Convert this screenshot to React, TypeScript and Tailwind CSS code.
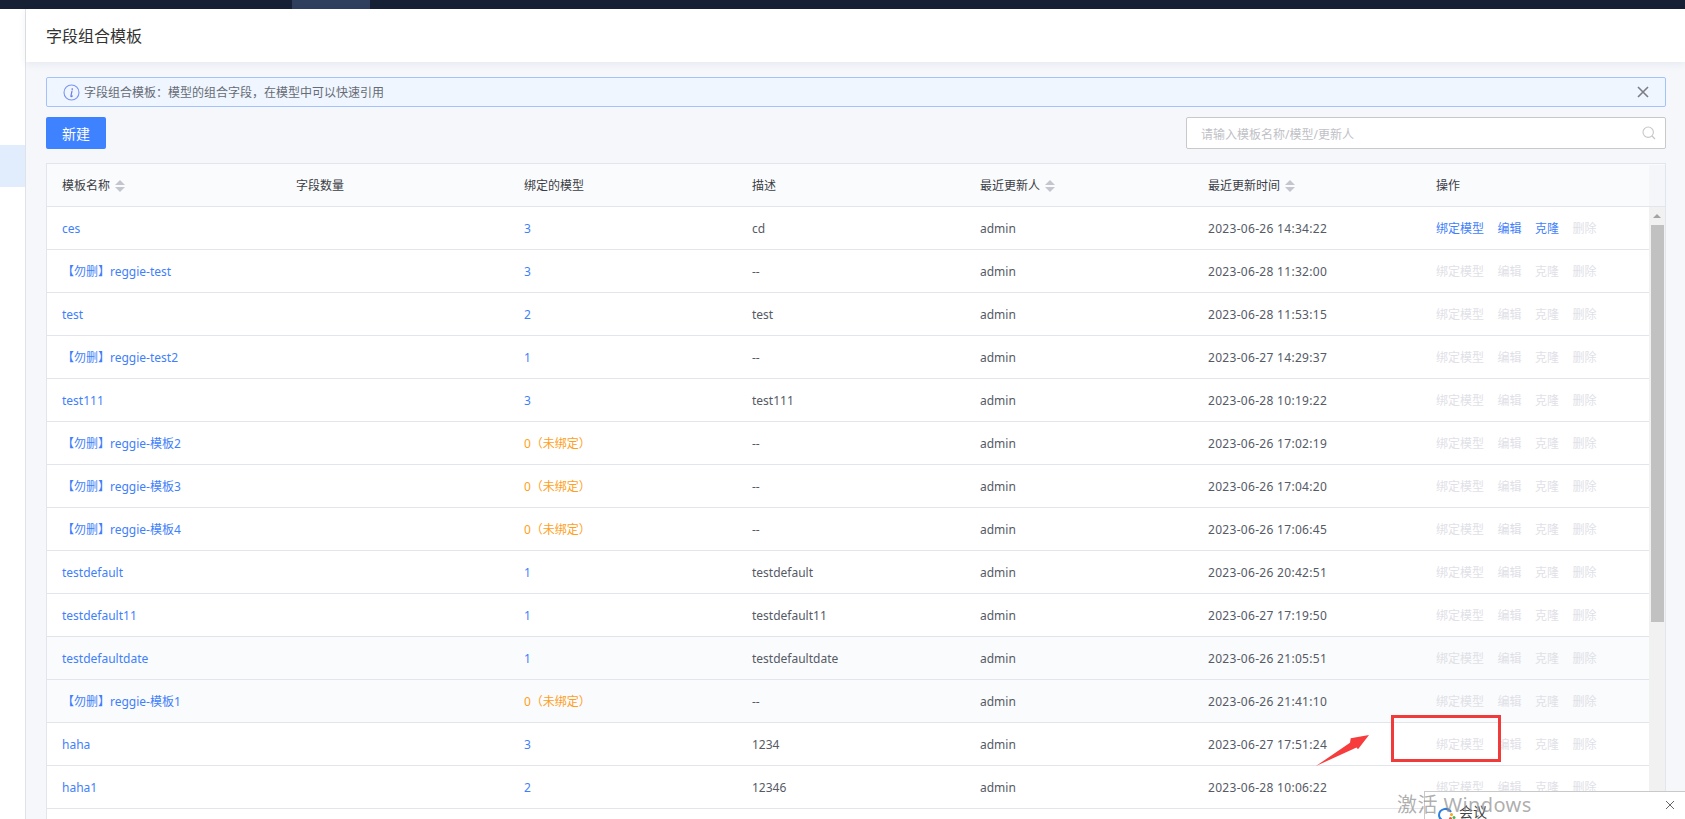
const rows = [
  { name: "ces", count: "3", desc: "cd", time: "2023-06-26 14:34:22" },
  { name: "【勿删】reggie-test", count: "3", desc: "--", time: "2023-06-28 11:32:00" },
  { name: "test", count: "2", desc: "test", time: "2023-06-28 11:53:15" },
  { name: "【勿删】reggie-test2", count: "1", desc: "--", time: "2023-06-27 14:29:37" },
  { name: "test111", count: "3", desc: "test111", time: "2023-06-28 10:19:22" },
  { name: "【勿删】reggie-模板2", count: "0", desc: "--", time: "2023-06-26 17:02:19" },
  { name: "【勿删】reggie-模板3", count: "0", desc: "--", time: "2023-06-26 17:04:20" },
  { name: "【勿删】reggie-模板4", count: "0", desc: "--", time: "2023-06-26 17:06:45" },
  { name: "testdefault", count: "1", desc: "testdefault", time: "2023-06-26 20:42:51" },
  { name: "testdefault11", count: "1", desc: "testdefault11", time: "2023-06-27 17:19:50" },
  { name: "testdefaultdate", count: "1", desc: "testdefaultdate", time: "2023-06-26 21:05:51", tint: true },
  { name: "【勿删】reggie-模板1", count: "0", desc: "--", time: "2023-06-26 21:41:10", tint: true },
  { name: "haha", count: "3", desc: "1234", time: "2023-06-27 17:51:24" },
  { name: "haha1", count: "2", desc: "12346", time: "2023-06-28 10:06:22" },
  { name: "", count: "", desc: "", time: "" },
];

function SortIcon() {
  return (
    <svg width="10" height="12" viewBox="0 0 10 12" className="ml-[5px] shrink-0">
      <path d="M5 0 10 5H0Z" fill="#c3c6ce" />
      <path d="M5 12 0 7H10Z" fill="#c3c6ce" />
    </svg>
  );
}

function HeadCell({ label, sort, className }: { label: string; sort?: boolean; className: string }) {
  return (
    <div className={`flex items-center ${className}`}>
      <span>{label}</span>
      {sort && <SortIcon />}
    </div>
  );
}

function Row({ row, index }: { row: (typeof rows)[number]; index: number }) {
  const active = index === 0;
  const actionColor = active ? "text-[#3f7ffb]" : "text-[#dfe1e7]";
  return (
    <div className={`flex h-[43px] shrink-0 items-center border-b border-[#e3e5ec] pt-[1px] text-[#555a66] ${row.tint ? "bg-[#fafbfc]" : "bg-white"}`}>
      <div className="w-[233px] pl-[15px] text-[#3f7ffb]">{row.name}</div>
      <div className="w-[228px]" />
      <div className="w-[228px] pl-4">
        {row.count === "0" ? (
          <span className="text-[#ff9f1c]">0（未绑定）</span>
        ) : (
          <span className="text-[#3f7ffb]">{row.count}</span>
        )}
      </div>
      <div className="w-[228px] pl-4">{row.desc}</div>
      <div className="w-[228px] pl-4">{row.name && "admin"}</div>
      <div className="w-[228px] pl-4 tracking-[0.3px]">{row.time}</div>
      {row.name && (
        <div className={`flex gap-[13.5px] pl-4 ${actionColor}`}>
          <span>绑定模型</span>
          <span>编辑</span>
          <span>克隆</span>
          <span className="text-[#dfe1e7]">删除</span>
        </div>
      )}
    </div>
  );
}

export default function App() {
  return (
    <div className="relative flex h-[819px] w-full flex-col overflow-hidden bg-white text-[12px] font-['Noto_Sans','Noto_Sans_CJK_SC',sans-serif]">
      <div className="h-[9px] shrink-0 bg-[#172136]">
        <div className="ml-[292px] h-full w-[78px] bg-[#2f3f5e]" />
      </div>

      <div className="flex min-h-0 flex-1">
        <aside className="w-[26px] shrink-0 border-r border-[#dfe2ea] bg-white pt-[136px]">
          <div className="h-[42px] bg-[#e1ecfd]" />
        </aside>

        <main className="flex min-w-0 flex-1 flex-col bg-[#f5f7fb]">
          <header className="flex h-[53px] shrink-0 items-center bg-white pl-5 pt-[1px] text-[16px] text-[#333] shadow-[0_2px_8px_rgba(30,40,70,0.07)]">
            字段组合模板
          </header>

          <div className="flex min-h-0 flex-1 flex-col pl-5 pr-[19px] pt-[15px]">
            <div className="flex h-[30px] shrink-0 items-center rounded-[2px] border border-[#a3c4fb] bg-[#eff6ff] pl-4 pr-4 text-[#666b75]">
              <svg width="17" height="17" viewBox="0 0 17 17" fill="none" className="mr-[4px] shrink-0">
                <circle cx="8.5" cy="8.5" r="7.5" stroke="#7a94f2" strokeWidth="1.1" />
                <path d="M9.2 4.6v1.2M8.9 7.4 7.9 12.2c-.1.5.4.6 1.4-.2" stroke="#6a7ce8" strokeWidth="1.2" strokeLinecap="round" />
              </svg>
              <span className="pt-[1px]">字段组合模板：模型的组合字段，在模型中可以快速引用</span>
              <svg width="12" height="12" viewBox="0 0 12 12" className="ml-auto" fill="none">
                <path d="M1 1 11 11M11 1 1 11" stroke="#7b7e85" strokeWidth="1.6" />
              </svg>
            </div>

            <div className="mt-[10px] flex h-[32px] shrink-0 items-stretch justify-between">
              <button className="w-[60px] rounded-[2px] bg-[#3f82ff] pt-[1px] text-[14px] text-white">新建</button>
              <div className="flex w-[480px] items-center justify-between rounded-[2px] border border-[#c9c9cc] bg-white pl-[14px] pr-[9px] text-[#bfc1c6]">
                <span className="pt-[3px]">请输入模板名称/模型/更新人</span>
                <svg width="14" height="14" viewBox="0 0 14 14" fill="none">
                  <circle cx="6.2" cy="6.2" r="5.2" stroke="#c5c7cc" strokeWidth="1.1" />
                  <path d="M10 10 13 13" stroke="#c5c7cc" strokeWidth="1.2" />
                </svg>
              </div>
            </div>

            <div className="mt-[14px] flex min-h-0 flex-1 flex-col border border-[#e3e5ec] border-b-0">
              <div className="flex h-[43px] shrink-0 border-b border-[#e3e5ec] bg-[#fafbfd] pt-[1px] text-[#3a3d45]">
                <div className="flex flex-1">
                  <HeadCell label="模板名称" sort className="w-[233px] pl-[15px]" />
                  <HeadCell label="字段数量" className="w-[228px] pl-4" />
                  <HeadCell label="绑定的模型" className="w-[228px] pl-4" />
                  <HeadCell label="描述" className="w-[228px] pl-4" />
                  <HeadCell label="最近更新人" sort className="w-[228px] pl-4" />
                  <HeadCell label="最近更新时间" sort className="w-[228px] pl-4" />
                  <HeadCell label="操作" className="w-[200px] pl-4" />
                </div>
                <div className="w-[16px] shrink-0 bg-[#f5f6fa]" />
              </div>

              <div className="flex min-h-0 flex-1 overflow-hidden">
                <div className="flex min-w-0 flex-1 flex-col">
                  {rows.map((row, i) => (
                    <Row key={i} row={row} index={i} />
                  ))}
                </div>
                <div className="flex w-[16px] shrink-0 flex-col items-center bg-[#f1f1f1] pt-[7px]">
                  <svg width="8" height="4" viewBox="0 0 8 4">
                    <path d="M4 0 8 4H0Z" fill="#a3a3a3" />
                  </svg>
                  <div className="ml-[1px] mt-[7px] h-[397px] w-[13px] bg-[#c1c1c1]" />
                </div>
              </div>
            </div>
          </div>
        </main>
      </div>

      {/* annotation drawn on top of the screenshot */}
      <div className="absolute left-[1391px] top-[715px] h-[47px] w-[110px] border-[3px] border-[#f13a3a]" />
      <svg className="absolute left-[1316px] top-[735px]" width="53" height="31" viewBox="0 0 53 31">
        <path d="M0 31 34 7.7 34.7 3.3 53 0 42 14.3 40.5 12.5Z" fill="#f63c3c" />
      </svg>

      {/* meeting popup + windows watermark */}
      <div className="absolute bottom-0 left-[1424px] right-0 top-[791px] border-l border-t border-[#c9c9c9] bg-white">
        <svg className="absolute left-[12px] top-[14px]" width="20" height="15" viewBox="0 0 20 15" fill="none">
          <path d="M2 9a6.5 6.5 0 0 1 12-3" stroke="#2c7fe0" strokeWidth="2" />
          <path d="M2 9c0 2 1 4 3 5" stroke="#2c7fe0" strokeWidth="2" />
          <circle cx="14.5" cy="8.5" r="1.5" fill="#f2a91b" />
          <circle cx="17" cy="11.5" r="1.5" fill="#4fb34f" />
          <circle cx="13.5" cy="12.5" r="1.5" fill="#e6583c" />
        </svg>
        <span className="absolute left-[34px] top-[13px] text-[14px] leading-[14px] text-[#444]">会议</span>
        <svg className="absolute right-[11px] top-[9px]" width="8" height="8" viewBox="0 0 8 8" fill="none">
          <path d="M0 0 8 8M8 0 0 8" stroke="#666" />
        </svg>
      </div>
      <div className="absolute left-[1397px] top-[790px] text-[20px] leading-[30px] tracking-[0.4px] text-[#8c8c8c]/70">激活 Windows</div>
    </div>
  );
}
